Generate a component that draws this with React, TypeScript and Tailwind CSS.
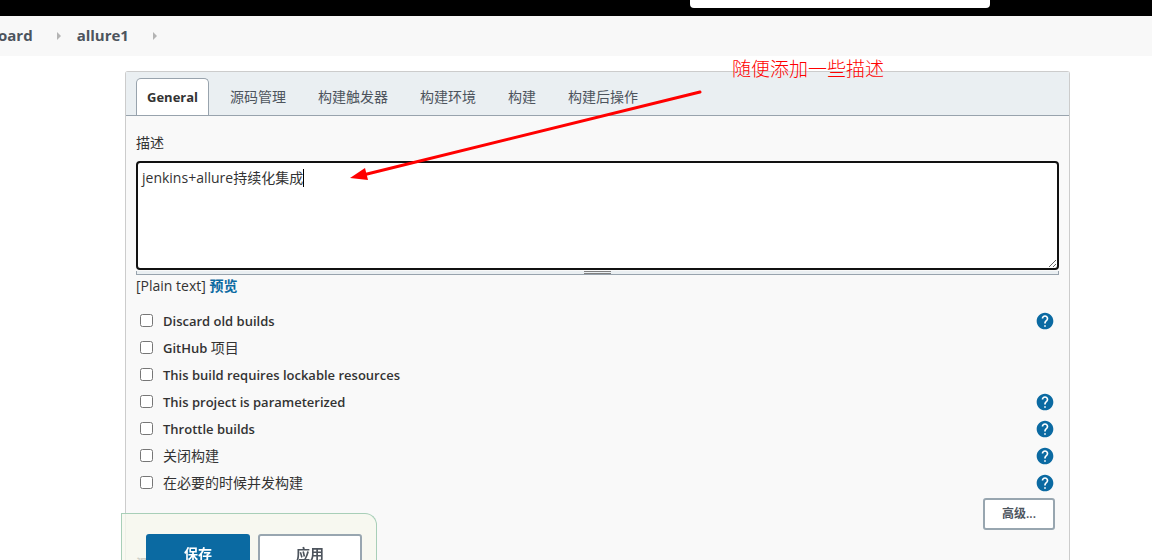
import React, { useState } from 'react';

const tabs = ['General', '源码管理', '构建触发器', '构建环境', '构建', '构建后操作'];

const options = [
  { id: 'discard', label: 'Discard old builds', labelZh: '', help: true },
  { id: 'github', label: 'GitHub ', labelZh: '项目', help: false },
  { id: 'lockable', label: 'This build requires lockable resources', labelZh: '', help: false },
  { id: 'params', label: 'This project is parameterized', labelZh: '', help: true },
  { id: 'throttle', label: 'Throttle builds', labelZh: '', help: true },
  { id: 'disable', label: '', labelZh: '关闭构建', help: true },
  { id: 'concurrent', label: '', labelZh: '在必要的时候并发构建', help: true },
];

const Chevron: React.FC = () => (
  <svg className="h-2 w-1" viewBox="0 0 4 8" fill="#b4b4b4" aria-hidden="true">
    <path d="M0 0l4 4-4 4z" />
  </svg>
);

const HelpIcon: React.FC = () => (
  <svg className="size-5" viewBox="0 0 24 24" fill="#0b6aa2" aria-hidden="true">
    <circle cx="12" cy="12" r="9" fill="#fff" />
    <path d="M12 2C6.48 2 2 6.48 2 12s4.48 10 10 10 10-4.48 10-10S17.52 2 12 2zm1 17h-2v-2h2v2zm2.07-7.75l-.9.92C13.45 12.9 13 13.5 13 15h-2v-.5c0-1.1.45-2.1 1.17-2.83l1.24-1.26c.37-.36.59-.86.59-1.41 0-1.1-.9-2-2-2s-2 .9-2 2H8c0-2.21 1.79-4 4-4s4 1.79 4 4c0 .88-.36 1.68-.93 2.25z" />
  </svg>
);

const App: React.FC = () => {
  const [activeTab, setActiveTab] = useState('General');
  const [description, setDescription] = useState('jenkins+allure持续化集成');
  const [checked, setChecked] = useState<Record<string, boolean>>({});

  return (
    <div className="relative flex min-h-screen flex-col overflow-hidden bg-white font-['Open_Sans','Noto_Sans_CJK_SC',sans-serif] text-sm text-[#333]">
      {/* Top bar */}
      <header className="flex h-4 justify-end bg-black pr-[162px]">
        <input type="search" aria-label="Search" className="h-2 w-[300px] rounded-b bg-white" />
      </header>

      {/* Breadcrumbs */}
      <nav className="flex h-10 items-center bg-[#f8f8f8] text-[15px] font-bold text-[#4d545d]">
        <div className="-ml-[49px] flex items-center gap-6">
          <a href="#dashboard">Dashboard</a>
          <Chevron />
        </div>
        <div className="ml-4 flex items-center gap-6">
          <a href="#allure1">allure1</a>
          <Chevron />
        </div>
      </nav>

      <main className="mt-[15px] mr-[82px] ml-[125px] flex-1 rounded-t-[3px] border border-b-0 border-[#ccc] bg-[#f9f9f9]">
        {/* Section tabs */}
        <div className="flex h-11 items-end border-b border-[#98a3ad] bg-[#eaeff2] px-2.5">
          {tabs.map(tab => (
            <button
              key={tab}
              onClick={() => setActiveTab(tab)}
              className={`mr-2.5 h-[37px] border px-2.5 ${activeTab === tab ? 'rounded-t-[5px] border-b-0 border-[#98a3ad] bg-white text-[13px] font-bold text-[#333]' : 'border-transparent text-[#4d545d]'}`}
            >
              {tab}
            </button>
          ))}
        </div>

        <div className="px-2.5 pt-[17px]">
          <label htmlFor="description" className="block leading-5">描述</label>
          <div className="relative mt-2">
            <textarea
              id="description"
              value={description}
              onChange={e => setDescription(e.target.value)}
              className="block h-[109px] w-full resize rounded border-2 border-[#111] bg-white px-1 py-[5px] leading-5 outline-none"
            />
            <span className="absolute top-2 left-[167px] h-[18px] w-px bg-black" />
          </div>
          <div className="mt-px flex h-1 justify-center border border-t-0 border-[#98a3ad] bg-[#eaeff2]">
            <div className="h-[3px] w-[27px] border-y border-[#808080]" />
          </div>
          <div className="pt-px leading-5">
            [Plain text] <a href="#preview" className="font-bold text-[#0b6aa2]">预览</a>
          </div>

          <div className="mt-[11px] flex flex-col">
            {options.map(option => (
              <div key={option.id} className="flex h-[27px] items-center pr-1 pl-1">
                <input
                  id={option.id}
                  type="checkbox"
                  checked={!!checked[option.id]}
                  onChange={e => setChecked({ ...checked, [option.id]: e.target.checked })}
                  className="size-[13px]"
                />
                <label htmlFor={option.id} className="ml-2.5 flex-1 text-[13px] leading-5 font-semibold">
                  {option.label}
                  {option.labelZh && <span className="text-sm font-normal">{option.labelZh}</span>}
                </label>
                {option.help && (
                  <button aria-label={`Help: ${option.label}${option.labelZh}`}><HelpIcon /></button>
                )}
              </div>
            ))}
          </div>

          <div className="flex justify-end pt-0.5 pr-1">
            <button className="h-8 w-[72px] rounded-[3px] border-2 border-[#98a6b0] bg-white text-xs font-semibold text-[#4d545d]">高级...</button>
          </div>

          <h2 className="mt-6 font-bold leading-5">源码管理</h2>
        </div>
      </main>

      {/* Floating action bar, runs past the bottom of the window */}
      <div className="fixed -bottom-7 left-[121px] flex gap-2 rounded-tr-xl border border-b-0 border-[#a8cfb8] bg-[#f6f8ed]/80 pt-5 pr-3.5 pb-3.5 pl-6">
        <button className="h-10 w-[104px] rounded-[3px] bg-[#0b6aa2] font-bold text-white">保存</button>
        <button className="h-10 w-[104px] rounded-[3px] border-2 border-[#98a6b0] bg-white font-bold text-[#4d545d]">应用</button>
      </div>

      {/* Annotation */}
      <p className="absolute top-[54px] left-[732px] font-['Noto_Sans_CJK_SC',sans-serif] text-[19px] leading-7 font-light text-[#f00]">随便添加一些描述</p>
      <svg className="pointer-events-none absolute top-[85px] left-[345px] h-[100px] w-[360px]" viewBox="0 0 360 100" aria-hidden="true">
        <path d="M355 7L18 90" stroke="#f00" strokeWidth="3" strokeLinecap="round" />
        <path d="M5 93L20 83L23 95z" fill="#f00" />
      </svg>
    </div>
  );
};

export default App;
